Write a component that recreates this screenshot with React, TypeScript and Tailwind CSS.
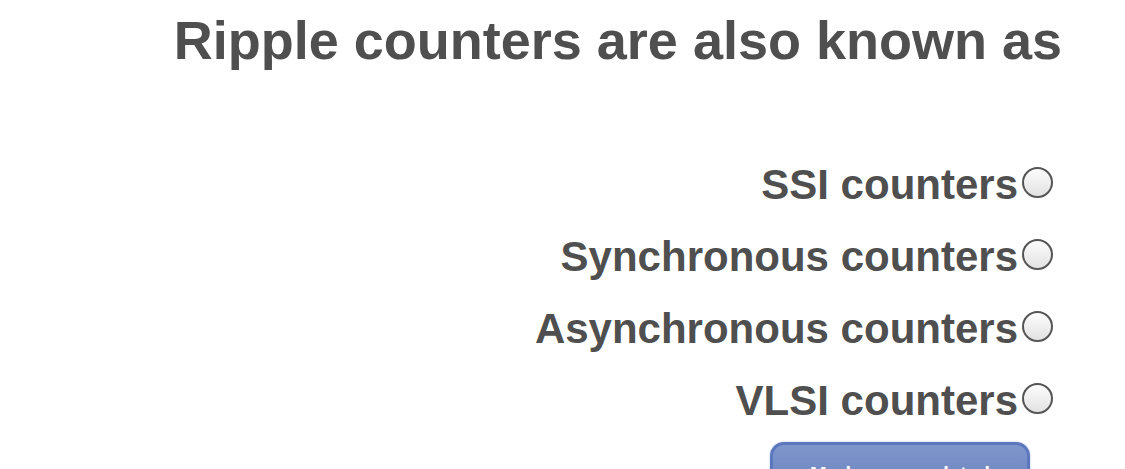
import { useState } from "react"

const options = ["SSI counters", "Synchronous counters", "Asynchronous counters", "VLSI counters"]

export default function App() {
    const [picked, setPicked] = useState<number | null>(null)

    return (
        <div className="w-[1125px] h-[469px] overflow-hidden bg-white text-[#4f4f4f] font-['Liberation_Sans',Arial,sans-serif] font-bold">
            {/* Question */}
            <h1 className="mt-[9px] pr-[63px] text-right text-[54px] leading-[62px]">
                Ripple counters are also known as
            </h1>

            {/* Answers */}
            <div className="mt-[78px] flex flex-col items-end pr-[72px]">
                {options.map((label, i) => (
                    <label
                        key={label}
                        className="flex items-start gap-[4px] h-[72px] cursor-pointer"
                        onClick={() => setPicked(i)}
                    >
                        <span className="text-[42px] leading-[72px]">{label}</span>
                        <span className="mt-[18px] w-[31px] h-[31px] rounded-full border-2 border-[#555] bg-gradient-to-b from-[#fcfcfc] to-[#e2e2e2] flex items-center justify-center">
                            {picked === i && <span className="w-[13px] h-[13px] rounded-full bg-[#444]" />}
                        </span>
                    </label>
                ))}
            </div>

            {/* Submit */}
            <div className="flex justify-end pr-[95px] mt-[5px]">
                <button className="w-[260px] h-[60px] rounded-[14px] border-[3px] border-[#5b77bd] bg-gradient-to-b from-[#7f96cb] to-[#6781bd] text-white text-[20px] pt-[14px] items-start flex justify-center shadow-[0_0_2px_#9fb2dd]">
                    Mark as completed
                </button>
            </div>
        </div>
    )
}
